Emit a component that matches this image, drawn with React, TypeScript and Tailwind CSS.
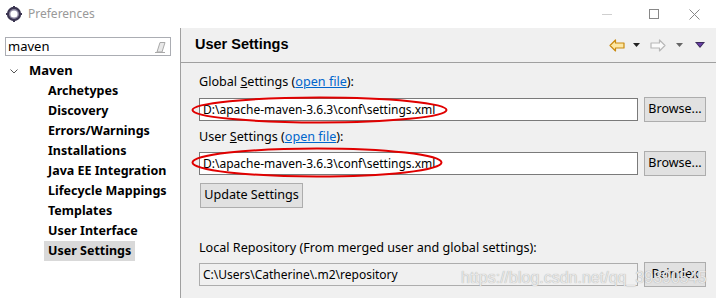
const ui = "font-['Noto_Sans',sans-serif]"

function TitleBar(): React.JSX.Element {
  return (
    <div className="flex h-[28px] items-center bg-white">
      {/* eclipse-ish gear icon */}
      <svg className="ml-[6px] h-[16px] w-[16px]" viewBox="0 0 16 16">
        <circle cx="8" cy="8" r="7.2" fill="#3b3551" />
        <circle cx="8" cy="8" r="5" fill="#8f8aa3" />
        <circle cx="8" cy="8" r="3.6" fill="#fff" />
        <rect x="7" y="0" width="2" height="3" fill="#3b3551" />
        <rect x="7" y="13" width="2" height="3" fill="#3b3551" />
        <rect x="0" y="7" width="3" height="2" fill="#3b3551" />
        <rect x="13" y="7" width="3" height="2" fill="#3b3551" />
      </svg>
      <span className={`${ui} ml-[6px] text-[12px] text-[#999]`}>Preferences</span>
      <div className="ml-auto flex items-center">
        <div className="mr-[37px] h-px w-[10px] bg-[#cfcfcf]" />
        <div className="mr-[30px] h-[10px] w-[10px] border border-[#888]" />
        <svg className="mr-[16px] h-[11px] w-[11px]" viewBox="0 0 11 11">
          <path d="M0.5 0.5 L10.5 10.5 M10.5 0.5 L0.5 10.5" stroke="#888" strokeWidth="1" />
        </svg>
      </div>
    </div>
  )
}

function Tree(): React.JSX.Element {
  const items = [
    'Archetypes',
    'Discovery',
    'Errors/Warnings',
    'Installations',
    'Java EE Integration',
    'Lifecycle Mappings',
    'Templates',
    'User Interface',
    'User Settings'
  ]
  return (
    <div className={`${ui} mt-[5px] text-[12.5px] font-bold text-black`}>
      <div className="flex h-[20px] items-center">
        <svg className="ml-[10px] h-[5px] w-[8px]" viewBox="0 0 8 5">
          <path d="M0.5 0.5 L4 4 L7.5 0.5" stroke="#555" fill="none" strokeWidth="1" />
        </svg>
        <span className="ml-[11px] text-[13px]">Maven</span>
      </div>
      {items.map((item) => (
        <div key={item} className="flex h-[20px] items-center">
          <span
            className={`ml-[44px] flex h-[20px] items-center px-[4px] ${
              item === 'User Settings' ? 'bg-[#d9d9d9]' : ''
            }`}
          >
            {item}
          </span>
        </div>
      ))}
    </div>
  )
}

function LeftPanel(): React.JSX.Element {
  return (
    <div className="w-[181px] shrink-0 border-r border-[#a0a0a0] bg-white pt-[9px]">
      <div className="ml-[5px] flex h-[19px] w-[166px] items-center border border-[#abadb3] bg-white">
        <span className={`${ui} ml-[2px] text-[13px] text-black`}>maven</span>
        {/* eraser */}
        <svg className="ml-auto mr-[4px] h-[12px] w-[12px]" viewBox="0 0 12 12">
          <path d="M3 11 L6 1.5 L11 1.5 L8 11 Z" fill="#e8e8e8" stroke="#a9a9a9" strokeWidth="1" />
          <path d="M1 11.5 L11 11.5" stroke="#a9a9a9" strokeWidth="1" />
        </svg>
      </div>
      <Tree />
    </div>
  )
}

function Toolbar(): React.JSX.Element {
  return (
    <div className="flex items-center">
      <svg className="h-[13px] w-[16px]" viewBox="0 0 16 13">
        <path
          d="M1 6.5 L6.5 1 L6.5 4 L15 4 L15 9 L6.5 9 L6.5 12 Z"
          fill="#fde7a3"
          stroke="#c98a10"
          strokeWidth="1.2"
          strokeLinejoin="round"
        />
      </svg>
      <svg className="ml-[8px] h-[4px] w-[7px]" viewBox="0 0 7 4">
        <path d="M0 0 L7 0 L3.5 4 Z" fill="#222" />
      </svg>
      <svg className="ml-[10px] h-[13px] w-[16px]" viewBox="0 0 16 13">
        <path
          d="M15 6.5 L9.5 1 L9.5 4 L1 4 L1 9 L9.5 9 L9.5 12 Z"
          fill="#fafafa"
          stroke="#b8b8b8"
          strokeWidth="1.2"
          strokeLinejoin="round"
        />
      </svg>
      <svg className="ml-[10px] h-[4px] w-[7px]" viewBox="0 0 7 4">
        <path d="M0 0 L7 0 L3.5 4 Z" fill="#666" />
      </svg>
      <svg className="ml-[12px] h-[6px] w-[10px]" viewBox="0 0 10 6">
        <path d="M0 0 L10 0 L5 6 Z" fill="#3a2a5a" />
        <path d="M2 1 L8 1 L5 4.5 Z" fill="#6a3fa8" />
      </svg>
    </div>
  )
}

function PathRow({ value }: { value: string }): React.JSX.Element {
  return (
    <div className="flex h-[25px] items-center">
      <div className="flex h-[23px] w-[439px] items-center border border-[#7a7a7a] bg-white pl-[3px] text-[12px] text-black">
        {value}
      </div>
      <button className="ml-[6px] h-[25px] w-[62px] border border-[#adadad] bg-[#e1e1e1] text-[12.5px] text-black">
        Browse...
      </button>
    </div>
  )
}

function RightPanel(): React.JSX.Element {
  const path = 'D:\\apache-maven-3.6.3\\conf\\settings.xml'
  return (
    <div className={`${ui} relative flex-1 bg-[#f0f0f0]`}>
      <div className="flex h-[35px] items-center border-b border-[#a0a0a0] pl-[14px] pr-[11px]">
        <span className="font-['Liberation_Sans',sans-serif] text-[14.5px] font-bold text-black">
          User Settings
        </span>
        <div className="ml-auto">
          <Toolbar />
        </div>
      </div>

      <div className="pl-[18px] pr-[9px] pt-[10px] text-[12.6px] text-black">
        <div className="h-[18px] leading-[18px]">
          Global <span className="underline">S</span>ettings (
          <span className="text-[#0066cc] underline">open file</span>):
        </div>
        <div className="mt-[6px]">
          <PathRow value={path} />
        </div>

        <div className="mt-[6px] h-[18px] leading-[18px]">
          User <span className="underline">S</span>ettings (
          <span className="text-[#0066cc] underline">open file</span>):
        </div>
        <div className="mt-[5px]">
          <PathRow value={path} />
        </div>

        <button className="ml-px mt-[7px] h-[25px] w-[103px] border border-[#adadad] bg-[#e1e1e1] text-[12.6px] text-black">
          Update Settings
        </button>

        <div className="mt-[31px] h-[18px] leading-[18px]">
          Local Repository (From merged user and global settings):
        </div>
        <div className="mt-[5px] flex h-[25px] items-center">
          <div className="flex h-[23px] w-[439px] items-center border border-[#adadad] bg-[#f0f0f0] pl-[3px] text-[12px] text-black">
            C:\Users\Catherine\.m2\repository
          </div>
          <button className="ml-[6px] h-[25px] w-[62px] border border-[#adadad] bg-[#e1e1e1] text-[12.6px] text-black">
            Reindex
          </button>
        </div>
      </div>

      {/* red annotation ellipses */}
      <svg className="pointer-events-none absolute left-0 top-0 h-full w-full" viewBox="0 0 534 270">
        <ellipse cx="138" cy="82" rx="127" ry="12.5" fill="none" stroke="#e00000" strokeWidth="2" />
        <ellipse cx="135.5" cy="134.5" rx="124.5" ry="14" fill="none" stroke="#e00000" strokeWidth="2" />
      </svg>

      {/* watermark */}
      <div className="pointer-events-none absolute left-[280px] top-[238px] font-['Liberation_Sans',sans-serif] text-[16px] text-[#e8e8e8] [text-shadow:0_0_1px_#9a9a9a]">
        https://blog.csdn.net/qq_39390545
      </div>
    </div>
  )
}

export default function App(): React.JSX.Element {
  return (
    <div className="flex h-[298px] w-[716px] flex-col overflow-hidden bg-white">
      <TitleBar />
      <div className="flex flex-1">
        <LeftPanel />
        <RightPanel />
      </div>
    </div>
  )
}
